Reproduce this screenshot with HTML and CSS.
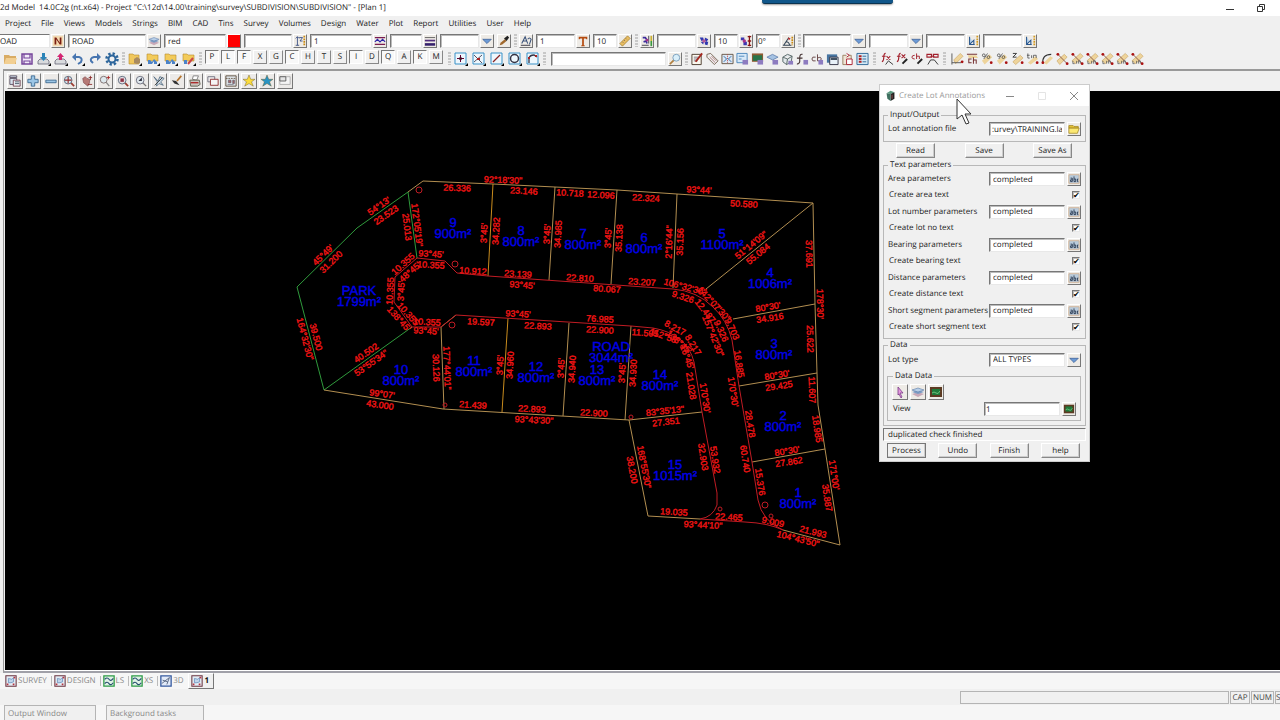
FILE: index.html
```
<!DOCTYPE html>
<html lang="en">
<head>
    <meta charset="UTF-8">
    <meta name="viewport" content="width=device-width, initial-scale=1.0">
    <title>12d Model - Plan 1</title>
    <link rel="stylesheet" href="styles.css">
</head>
<body>
    <!-- shared icons -->
    <svg class="sprite" aria-hidden="true">
        <symbol id="i-n" viewBox="0 0 14 14"><rect x="1" y="1" width="12" height="12" fill="#f3d9b0"/><path d="M3 11V3h2l4 6V3h2v8H9L5 5v6z" fill="#7a1c10"/></symbol>
        <symbol id="i-layers" viewBox="0 0 14 14"><path d="M1 9l6-2 6 2-6 3z" fill="#c9a9b8"/><path d="M1 7l6-2 6 2-6 2z" fill="#7d9cc4"/><path d="M1 5l6-2 6 2-6 2z" fill="#b9cfe8" stroke="#5a7aa8" stroke-width=".6"/></symbol>
        <symbol id="i-red" viewBox="0 0 14 14"><rect width="14" height="14" fill="#f00"/></symbol>
        <symbol id="i-height" viewBox="0 0 14 14"><path d="M4 2v10M2 4l2-2 2 2M2 12h4M6 3h4L7 7h3" fill="none" stroke="#334a80"/><path d="M12 1v12" stroke="#c98a10" stroke-width="2" stroke-dasharray="2 1"/></symbol>
        <symbol id="i-linestyle" viewBox="0 0 14 14"><path d="M1 3h12M1 11h12" stroke="#7a1c50" stroke-width="1.5"/><path d="M1 8l3-3 3 3 3-3 3 3" fill="none" stroke="#2a22a8" stroke-width="1.3"/></symbol>
        <symbol id="i-weight" viewBox="0 0 14 14"><path d="M1 3h12" stroke="#555"/><path d="M1 6.500h12" stroke="#51307c" stroke-width="2"/><path d="M1 11h12" stroke="#34206c" stroke-width="3"/></symbol>
        <symbol id="i-down" viewBox="0 0 14 14"><path d="M2 5h10l-5 5z" fill="#6c9ad6" stroke="#31558c" stroke-width=".8"/></symbol>
        <symbol id="i-dropper" viewBox="0 0 14 14"><path d="M2 12l1-3 5-4 2 2-5 4z" fill="#a0682c"/><path d="M7 4l4-3 2 2-3 4z" fill="#222"/></symbol>
        <symbol id="i-font" viewBox="0 0 14 14"><path d="M2 10l4-8 3 8M3 7h5M9 5q2-3 4 0l-2 6" fill="none" stroke="#385078" stroke-width="1.2"/><path d="M1 12h11" stroke="#223"/></symbol>
        <symbol id="i-t" viewBox="0 0 14 14"><path d="M2 2h10v3h-1l-1-1H8v8h1v1H5v-1h1V4H4L3 5H2z" fill="#b44b10"/></symbol>
        <symbol id="i-ruler" viewBox="0 0 14 14"><path d="M1 10L10 1l3 3-9 9z" fill="#e8bd62" stroke="#9d7626" stroke-width=".8"/><path d="M4 8l1 1M6 6l1 1M8 4l1 1" stroke="#765"/></symbol>
        <symbol id="i-symbol" viewBox="0 0 14 14"><path d="M2 3h3l2 3M3 8l3-1 1 3" fill="none" stroke="#3b2d9c" stroke-width="2"/><path d="M9 1v9M1 12h8" stroke="#334"/><circle cx="7" cy="6" r="1.500" fill="#a5328a"/><path d="M12 1v6" stroke="#c9b030" stroke-width="2"/><path d="M12 7v6" stroke="#3a9a40" stroke-width="2"/></symbol>
        <symbol id="i-rotate" viewBox="0 0 14 14"><path d="M2 3h4l1 3-3 1zM8 3l4 2-2 3-2-1zM8 8h4l-1 4-3-1zM3 8l3 3 1-3z" fill="#2f38b0"/><circle cx="7" cy="7" r="2" fill="#b55a9a"/></symbol>
        <symbol id="i-size" viewBox="0 0 14 14"><path d="M1 3h4v3H1zM4 8h4v4H4z" fill="#3b38b0"/><circle cx="5" cy="7" r="2" fill="#a5328a"/><path d="M11 1v12M9 2h4M9 12h4M9 7h4" stroke="#8a1414" stroke-width="1.5"/></symbol>
        <symbol id="i-angle" viewBox="0 0 14 14"><path d="M1 12h10M2 12l6-9M5 8q3 0 4 4" fill="none" stroke="#345" stroke-width="1.2"/><path d="M7 3l3 1-2 2z" fill="#b22"/><path d="M12 2v10" stroke="#c98a10" stroke-width="2" stroke-dasharray="2 1"/></symbol>
        <symbol id="i-tri" viewBox="0 0 14 14"><path d="M3 2v9h6M3 11l5-5v5" fill="#b8d4ee" stroke="#28558c" stroke-width="1.200"/><path d="M12 1v12" stroke="#d49a20" stroke-width="2" stroke-dasharray="2 1"/></symbol>
        <symbol id="i-open" viewBox="0 0 14 14"><path d="M1 3h5l1 1h6v8H1z" fill="#d9ac64"/><path d="M3 6h11l-2 6H1z" fill="#f2cf92"/></symbol>
        <symbol id="i-save" viewBox="0 0 14 14"><path d="M2 2h10v10H2z" fill="#f2eaf8" stroke="#75459b" stroke-width="1.500"/><path d="M4 2v4h6V2M4 12V9h6v3" fill="none" stroke="#75459b" stroke-width="1.200"/></symbol>
        <symbol id="i-import" viewBox="0 0 14 14"><path d="M1 9l2-2h7l2 2v3H1z" fill="#d8dadd" stroke="#667" stroke-width=".8"/><path d="M5 1h3v4h2L6.500 9 3 5h2z" fill="#2b84b8"/><path d="M14 11v3h-3z"/></symbol>
        <symbol id="i-export" viewBox="0 0 14 14"><path d="M1 9l2-2h7l2 2v3H1z" fill="#d8dadd" stroke="#667" stroke-width=".8"/><path d="M5 8h3V5h2L6.500 1 3 5h2z" fill="#d32572"/><path d="M14 11v3h-3z"/></symbol>
        <symbol id="i-undo" viewBox="0 0 14 14"><path d="M3 5h5q4 1 2 5l-3 2" fill="none" stroke="#4775b0" stroke-width="2"/><path d="M1 5l4-4v8z" fill="#4775b0"/><path d="M14 11v3h-3z"/></symbol>
        <symbol id="i-redo" viewBox="0 0 14 14"><path d="M11 5H6q-4 1-3 4l2 2" fill="none" stroke="#4775b0" stroke-width="2"/><path d="M13 5L9 1v8z" fill="#4775b0"/></symbol>
        <symbol id="i-gear" viewBox="0 0 14 14"><circle cx="7" cy="7" r="5.500" fill="none" stroke="#2c659b" stroke-width="2.500" stroke-dasharray="2.300 2"/><circle cx="7" cy="7" r="3.500" fill="none" stroke="#2c659b" stroke-width="2"/></symbol>
        <symbol id="i-proj" viewBox="0 0 14 14"><path d="M1 2h4l1 1h5v9H1z" fill="#f0c75c" stroke="#b58a2c" stroke-width=".6"/><path d="M6 7l3-2 3 2v4l-3 1-3-1z" fill="#a88a60"/><path d="M14 11v3h-3z"/></symbol>
        <symbol id="i-projx" viewBox="0 0 14 14"><path d="M1 2h4l1 1h6v6H1z" fill="#f3cb5a" stroke="#b58a2c" stroke-width=".6"/><path d="M2 12V8h2l2 2 2-3 3 3v2H8V9l-2 3z" fill="#4b83c8"/><path d="M14 11v3h-3z"/></symbol>
        <symbol id="i-projr" viewBox="0 0 14 14"><path d="M1 2h4l1 1h6v6H1z" fill="#f3cb5a" stroke="#b58a2c" stroke-width=".6"/><path d="M2 8h3v4H2z" fill="#4b83c8"/><path d="M6 12l5-6" stroke="#c44" stroke-width="2"/><path d="M14 11v3h-3z"/></symbol>
        <symbol id="i-snap1" viewBox="0 0 14 14"><path d="M1 1h11v11H1z" fill="#eef7fd" stroke="#3991c7"/><path d="M6.500 3v7M3 6.500h7" stroke="#603"/><circle cx="6.500" cy="6.500" r="1.500" fill="#412"/><path d="M14 11v3h-3z"/></symbol>
        <symbol id="i-snap2" viewBox="0 0 14 14"><path d="M1 1h11v11H1z" fill="#eef7fd" stroke="#3991c7"/><path d="M2 3l8 8M10 3l-8 7" stroke="#556"/><path d="M5 6h3v2H5z" fill="#a22"/><path d="M14 11v3h-3z"/></symbol>
        <symbol id="i-snap3" viewBox="0 0 14 14"><path d="M1 1h11v11H1z" fill="#eef7fd" stroke="#3991c7"/><path d="M3 10l7-7" stroke="#822" stroke-width="1.300"/><path d="M14 11v3h-3z"/></symbol>
        <symbol id="i-snap4" viewBox="0 0 14 14"><path d="M1 1h11v11H1z" fill="#eef7fd" stroke="#3991c7"/><circle cx="6.500" cy="6.500" r="4" fill="none" stroke="#334" stroke-width="1.500"/><path d="M14 11v3h-3z"/></symbol>
        <symbol id="i-snap5" viewBox="0 0 14 14"><path d="M1 1h11v11H1z" fill="#eef7fd" stroke="#3991c7"/><path d="M3 11V6q1-3 5-3l3 2" fill="none" stroke="#334" stroke-width="1.300"/><path d="M2 5h2v2H2zM9 3h2v2H9z" fill="#a22"/><path d="M14 11v3h-3z"/></symbol>
        <symbol id="i-search" viewBox="0 0 14 14"><path d="M1 13l5-5" stroke="#b08040" stroke-width="2"/><circle cx="8.500" cy="5.500" r="4" fill="#d9effa" stroke="#7298b8"/></symbol>
        <symbol id="i-note" viewBox="0 0 14 14"><path d="M1 2h10v11H1z" fill="#fbf8ee" stroke="#4c3b2d"/><path d="M3 5h6M3 7h5M3 9h4" stroke="#778"/><path d="M5 10l7-9" stroke="#a52820" stroke-width="2"/></symbol>
        <symbol id="i-tag" viewBox="0 0 14 14"><path d="M1 2l4-1 8 8-4 4-8-8z" fill="#eee" stroke="#765"/><path d="M4 5l6 6M6 4l5 5" stroke="#a77"/></symbol>
        <symbol id="i-panel" viewBox="0 0 14 14"><path d="M1 2h12v10H1z" fill="#dde8f4" stroke="#654"/><path d="M3 4l3 3-3 3M11 4L8 7l3 3" fill="none" stroke="#2667a8"/><path d="M7 2v10" stroke="#b44" stroke-dasharray="1 1"/></symbol>
        <symbol id="i-grid" viewBox="0 0 14 14"><path d="M1 1h11v10H1z" fill="#d7e9f8" stroke="#4b86bb"/><path d="M3 4h6M3 7h3" stroke="#4b86bb"/><path d="M7 8h6v5H7z" fill="#8d7cc0"/></symbol>
        <symbol id="i-view" viewBox="0 0 14 14"><path d="M1 1h12v9H1z" fill="#8f5a32"/><path d="M2 3h10v6H2z" fill="#287448"/><path d="M7 8h6v5H7z" fill="#8d7cc0"/></symbol>
        <symbol id="i-lay2" viewBox="0 0 14 14"><path d="M1 5l6-3 6 3-6 3z" fill="#a5c2e2" stroke="#5a7aa8" stroke-width=".8"/><path d="M7 8h6v5H7z" fill="#8d7cc0"/></symbol>
        <symbol id="i-cube" viewBox="0 0 14 14"><path d="M2 5l5-3 5 2-1 6-5 3-4-3zM2 5l5 2 5-3M7 7l-1 6" fill="#e1e7ea" stroke="#566"/><path d="M8 9h5v4H8z" fill="#8d7cc0"/></symbol>
        <symbol id="i-func" viewBox="0 0 14 14"><path d="M7 2q-3-1-3 4v4q-1 3-3 2M1 6h6" fill="none" stroke="#433" stroke-width="1.200"/><path d="M8 8h5v5H8z" fill="#8d7cc0"/></symbol>
        <symbol id="i-chain" viewBox="0 0 14 14"><path d="M5 5q-4-1-4 2t4 2M7 2v7M7 6q4-2 4 1t-4 2" fill="none" stroke="#644"/><path d="M8 8h5v5H8z" fill="#8d7cc0"/></symbol>
        <symbol id="i-win" viewBox="0 0 14 14"><path d="M1 2h11v9H1z" fill="#4674a0"/><path d="M4 5h9v8H4z" fill="#e9f1f8" stroke="#334"/><path d="M5 7h7" stroke="#345" stroke-width="2"/></symbol>
        <symbol id="i-clip" viewBox="0 0 14 14"><path d="M2 3h9v10H2z" fill="#eee5d6" stroke="#9a8060"/><path d="M6 1l3 2-3 2M6 7h6v6H6z" fill="#fff" stroke="#a23"/></symbol>
        <symbol id="i-opts" viewBox="0 0 14 14"><path d="M1 1h12v12H1z" fill="#d5e9f6" stroke="#2d6796"/><path d="M3 4h3M3 7h3M3 10h3" stroke="#b02020" stroke-width="2"/><path d="M7 4h4M7 7h4M7 10h4" stroke="#2d6796"/></symbol>
        <symbol id="i-fx" viewBox="0 0 14 14"><path d="M5 1Q3 1 3 5t-2 5M1 4h4M6 4l4 4M10 4L6 8" fill="none" stroke="#a2202c" stroke-width="1.200"/><path d="M5 13l3-4 5 4" fill="none" stroke="#333"/></symbol>
        <symbol id="i-fxp" viewBox="0 0 14 14"><path d="M5 1Q3 1 3 5t-2 5M1 4h4M6 2l4 4M10 2L6 6" fill="none" stroke="#a2202c" stroke-width="1.200"/><path d="M7 12l5-5" stroke="#222" stroke-width="2"/></symbol>
        <symbol id="i-chp" viewBox="0 0 14 14"><path d="M4 3Q1 3 1 5t3 2M6 1v6M6 4h3v3" fill="none" stroke="#a2202c"/><path d="M7 12l5-5" stroke="#222" stroke-width="2"/></symbol>
        <symbol id="i-bind" viewBox="0 0 14 14"><path d="M1 2h5v3H1zM8 2h5v3H8zM5 4h4" fill="none" stroke="#a2202c" stroke-width="1.200"/><path d="M2 13l3-5h4l4 5" fill="none" stroke="#333"/></symbol>
        <symbol id="i-m" viewBox="0 0 14 14"><path d="M3 8L10 1l3 3-8 8z" fill="#eed49b" stroke="#c5a05b" stroke-width=".6"/><path d="M1 1v12M1 11h10" fill="none" stroke="#555"/><circle cx="12" cy="10" r="1.500" fill="#a11"/></symbol>
        <symbol id="i-mch" viewBox="0 0 14 14"><path d="M2 3h9l2 3H3z" fill="#eed49b"/><path d="M1 2h11M6 7H3v4h3M8 5v7M8 8h3v4" fill="none" stroke="#733" stroke-width="1.100"/></symbol>
        <symbol id="i-mpct" viewBox="0 0 14 14"><path d="M1 9L9 2l3 3-8 8z" fill="#eed49b"/><circle cx="3" cy="3" r="1.500" fill="none" stroke="#444" stroke-width=".8"/><path d="M3 7l4-6" stroke="#444" stroke-width=".8"/><circle cx="8" cy="5" r="1.500" fill="none" stroke="#444" stroke-width=".8"/><circle cx="11" cy="11" r="1.500" fill="#a11"/></symbol>
        <symbol id="i-mz" viewBox="0 0 14 14"><path d="M2 10L10 3l3 3-8 7z" fill="#eed49b" stroke="#c5a05b" stroke-width=".6"/><path d="M2 1h4L2 5h4" fill="none" stroke="#333"/><circle cx="12" cy="11" r="1.500" fill="#a11"/></symbol>
        <symbol id="i-mtin" viewBox="0 0 14 14"><path d="M2 11L10 4l3 3-8 6z" fill="#eed49b"/><path d="M2 1v5h2M1 3h3M6 3v3M8 6V3h3v3" fill="none" stroke="#444" stroke-width=".8"/><circle cx="12" cy="11" r="1.500" fill="#a11"/></symbol>
        <symbol id="i-marc" viewBox="0 0 14 14"><path d="M3 11L10 4l3 2-7 7z" fill="#eed49b"/><path d="M2 12Q1 2 11 2" fill="none" stroke="#333" stroke-width="1.300"/><circle cx="2" cy="11" r="1.500" fill="#a11"/></symbol>
        <symbol id="i-mx" viewBox="0 0 14 14"><path d="M1 9L9 2l3 3-8 8z" fill="#eed49b" stroke="#c5a05b" stroke-width=".6"/><path d="M2 2l10 10" stroke="#854"/><circle cx="2" cy="2" r="1.500" fill="#a11"/><circle cx="12" cy="12" r="1.500" fill="#a11"/></symbol>
        <symbol id="i-mxt" viewBox="0 0 14 14"><path d="M1 9L10 1l3 3-8 8z" fill="#eed49b" stroke="#c5a05b" stroke-width=".6"/><path d="M2 2l10 10" stroke="#854"/><path d="M2 9v3h2M6 9v3M8 12V9h2v3" fill="none" stroke="#555" stroke-width=".8"/><circle cx="2" cy="2" r="1.500" fill="#a11"/><circle cx="12" cy="12" r="1.500" fill="#a11"/></symbol>
        <symbol id="i-menu" viewBox="0 0 14 14"><path d="M1 1h8v2H1zM1 4h8v7H1z" fill="#d8e3ee" stroke="#534a5c"/><path d="M5 6h8v7H5z" fill="#e9eef4" stroke="#6b3a4a"/><path d="M7 8h5M7 10h5" stroke="#456"/></symbol>
        <symbol id="i-plus" viewBox="0 0 14 14"><path d="M5 1h4v4h4v4H9v4H5V9H1V5h4z" fill="#9cc6e6" stroke="#38668e"/></symbol>
        <symbol id="i-minus" viewBox="0 0 14 14"><path d="M1 6h12v3H1z" fill="#9cc6e6" stroke="#38668e"/></symbol>
        <symbol id="i-zoomx" viewBox="0 0 14 14"><path d="M9 9l4 4" stroke="#9d3c30" stroke-width="2"/><circle cx="6" cy="6" r="4.500" fill="#d5e6f0" stroke="#536476"/><path d="M6 2v8M2 6h8" stroke="#912828" stroke-width="1.300"/></symbol>
        <symbol id="i-pan" viewBox="0 0 14 14"><path d="M2 4l3-2 2 2 3 1v4l-2 4-5-4z" fill="#b57874" stroke="#7b4448" stroke-width=".7"/><path d="M11 1v5M9 3h4M8 11h5" stroke="#8a2828"/></symbol>
        <symbol id="i-zoomp" viewBox="0 0 14 14"><path d="M8 8l4 5" stroke="#888" stroke-width="1.500"/><circle cx="5.500" cy="5.500" r="4" fill="#dde8ed" stroke="#766"/><path d="M11 1v4M9 3h4" stroke="#a22"/></symbol>
        <symbol id="i-zoomb" viewBox="0 0 14 14"><path d="M9 9l4 4" stroke="#9d3c30" stroke-width="2"/><circle cx="6" cy="6" r="4.500" fill="#e4dfe4" stroke="#536476"/><path d="M4 4h4v4H4z" fill="#8d3345"/></symbol>
        <symbol id="i-zoomk" viewBox="0 0 14 14"><path d="M9 9l4 4" stroke="#777" stroke-width="1.500"/><circle cx="6" cy="6" r="4.500" fill="#e0e9ee" stroke="#667"/><path d="M4 7l4-4v4z" fill="#334"/></symbol>
        <symbol id="i-edit" viewBox="0 0 14 14"><path d="M1 2l5 5 2-5 5 2-4 4 3 4-5-2-3 3 1-5z" fill="#ccdbe6" stroke="#566f84"/><path d="M2 12L11 3" stroke="#333"/></symbol>
        <symbol id="i-brush" viewBox="0 0 14 14"><path d="M12 1L7 7" stroke="#b5742c" stroke-width="2"/><path d="M1 6l5 1 4 5-6-2z" fill="#333"/></symbol>
        <symbol id="i-print" viewBox="0 0 14 14"><path d="M4 5l1-4h6L9 6z" fill="#fff" stroke="#777"/><path d="M1 6h11l1 5-3 2H2z" fill="#c7c3bd" stroke="#554"/><path d="M2 9h9" stroke="#a22" stroke-width="1.500"/></symbol>
        <symbol id="i-copy" viewBox="0 0 14 14"><path d="M1 2h8v6H1z" fill="#eee" stroke="#667"/><path d="M4 5h9v7H4z" fill="#f5f5f5" stroke="#822"/></symbol>
        <symbol id="i-plan" viewBox="0 0 14 14"><path d="M1 1h12v12H1z" fill="#dfe5e9" stroke="#543"/><path d="M1 4h12" stroke="#654" stroke-dasharray="2 1"/><path d="M4 6h3v3H4zM9 6h2v4H9zM3 11h7" fill="#a66" stroke="#556" stroke-width=".7"/></symbol>
        <symbol id="i-star" viewBox="0 0 14 14"><path d="M7 0l2 5 5 0-4 3 2 5-5-3-5 3 2-5-4-3h5z" stroke="#665522" stroke-width=".5"/></symbol>
        <symbol id="i-layout" viewBox="0 0 14 14"><path d="M1 2h12v9H1z" fill="#f4f4f4" stroke="#aaa"/><path d="M1 2h7v5H1z" fill="#e4e4e4" stroke="#555"/></symbol>
        <symbol id="i-tabplan" viewBox="0 0 14 14"><path d="M1 1h12v12H1z" fill="#e4edf4" stroke="#6a3440" stroke-width="1.200"/><path d="M4 9V4l4 1 2-2v5l-3 1z" fill="#c3d6ea" stroke="#5a86b8" stroke-width=".8"/><path d="M2 10h2v2H2zM9 10h2v2H9z" fill="#b83440"/><path d="M10 2h2v2h-2z" fill="#b83440"/></symbol>
        <symbol id="i-tabsec" viewBox="0 0 14 14"><path d="M1 1h12v12H1z" fill="#dff2e4" stroke="#2f9c48" stroke-width="1.500"/><path d="M2 5q3-3 5 0t5-1M2 10q3-3 5 0t5-1" fill="none" stroke="#244c70" stroke-width="1.300"/></symbol>
        <symbol id="i-tab3d" viewBox="0 0 14 14"><path d="M1 1h12v12H1z" fill="#e2eaf8" stroke="#365aa0" stroke-width="1.500"/><path d="M2 10l9-7-3 8M3 6l6 2" fill="none" stroke="#4c5c78"/></symbol>
        <symbol id="i-folder" viewBox="0 0 14 14"><path d="M1 3h5l1 1h5v2H1z" fill="#e9c63a" stroke="#9a7c14" stroke-width=".8"/><path d="M1 12V6h12l-2 6z" fill="#fbe873" stroke="#9a7c14" stroke-width=".8"/></symbol>
        <symbol id="i-abc" viewBox="0 0 14 14"><path d="M1 2h12v10H1z" fill="#b9cbdc" stroke="#d0b090"/><path d="M3 6h2v4H3V8h2M7 4v6h2V7H7M12 7h-1v3h1" fill="none" stroke="#23344c"/></symbol>
        <symbol id="i-pick" viewBox="0 0 14 14"><path d="M5 2l5 6-3 0 2 4-1 1-2-4-1 1z" fill="#e59ade" stroke="#7a3b88" stroke-width=".8"/></symbol>
        <symbol id="i-screen" viewBox="0 0 14 14"><path d="M1 2h12v10H1z" fill="#5c3a22"/><path d="M3 4h8v6H3z" fill="#1f7a3a"/><path d="M3 8q2-2 4 0t4-2" fill="none" stroke="#6fc07c"/></symbol>
    </svg>

    <header class="titlebar">
        <h1 class="title">2d Model&nbsp; 14.0C2g (nt.x64) - Project "C:\12d\14.00\training\survey\SUBDIVISION\SUBDIVISION" - [Plan 1]</h1>
        <div class="win-buttons">
            <button aria-label="Minimize"><svg viewBox="0 0 10 10"><path d="M1 6.500h8" stroke="#333"/></svg></button>
            <button aria-label="Restore"><svg viewBox="0 0 10 10"><path d="M1.500 3.500h5v5h-5zM3.500 3V1.500h5v5H7" fill="none" stroke="#333"/></svg></button>
        </div>
        <div class="share-tab"></div>
    </header>

    <nav class="menubar">
        <button>Project</button><button>File</button><button>Views</button><button>Models</button><button>Strings</button><button>BIM</button><button>CAD</button><button>Tins</button><button>Survey</button><button>Volumes</button><button>Design</button><button>Water</button><button>Plot</button><button>Report</button><button>Utilities</button><button>User</button><button>Help</button>
    </nav>

    <div class="bar fields">
        <input class="w-l cut" value="OAD" aria-label="Name"><button class="btn" aria-label="Pick name"><svg><use href="#i-n"/></svg></button>
        <input class="w-xxl" value="ROAD" aria-label="Model"><button class="btn" aria-label="Pick model"><svg><use href="#i-layers"/></svg></button>
        <input class="w-xl" value="red" aria-label="Colour"><button class="btn" aria-label="Pick colour"><svg><use href="#i-red"/></svg></button>
        <input class="w-l" aria-label="Height"><button class="btn" aria-label="Pick height"><svg><use href="#i-height"/></svg></button>
        <input class="w-xl" value="1" aria-label="Line style"><button class="btn" aria-label="Pick line style"><svg><use href="#i-linestyle"/></svg></button>
        <input class="w-s" aria-label="Weight"><button class="btn" aria-label="Pick weight"><svg><use href="#i-weight"/></svg></button>
        <select class="w-m" aria-label="Tinable"><option></option></select><button class="btn" aria-label="Open tinable"><svg><use href="#i-down"/></svg></button>
        <button class="btn" aria-label="Pick attributes"><svg><use href="#i-dropper"/></svg></button>
        <span class="grip"></span>
        <button class="btn" aria-label="Text style"><svg><use href="#i-font"/></svg></button>
        <input class="w-m" value="1" aria-label="Textstyle"><button class="btn" aria-label="Pick textstyle"><svg><use href="#i-t"/></svg></button>
        <input class="w-xs" value="10" aria-label="Text size"><button class="btn" aria-label="Measure size"><svg><use href="#i-ruler"/></svg></button>
        <span class="grip"></span>
        <button class="btn" aria-label="Symbol"><svg><use href="#i-symbol"/></svg></button>
        <input class="w-m" aria-label="Symbol name"><button class="btn" aria-label="Pick symbol"><svg><use href="#i-rotate"/></svg></button>
        <input class="w-xs" value="10" aria-label="Symbol size"><button class="btn" aria-label="Measure symbol"><svg><use href="#i-size"/></svg></button>
        <input class="w-xs tight" value="0°" aria-label="Symbol angle"><button class="btn" aria-label="Measure angle"><svg><use href="#i-angle"/></svg></button>
        <span class="grip"></span>
        <select class="w-l" aria-label="Vertex"><option></option></select><button class="btn" aria-label="Open vertex"><svg><use href="#i-down"/></svg></button>
        <select class="w-m" aria-label="Segment"><option></option></select><button class="btn" aria-label="Open segment"><svg><use href="#i-down"/></svg></button>
        <input class="w-m" aria-label="Offset"><button class="btn" aria-label="Measure offset"><svg><use href="#i-tri"/></svg></button>
        <input class="w-m" aria-label="Raise"><button class="btn" aria-label="Measure raise"><svg><use href="#i-tri"/></svg></button>
    </div>

    <div class="bar">
        <div class="tools tools-file">
            <button aria-label="Open"><svg><use href="#i-open"/></svg></button>
            <button aria-label="Save"><svg><use href="#i-save"/></svg></button>
            <button aria-label="Import"><svg><use href="#i-import"/></svg></button>
            <button aria-label="Export"><svg><use href="#i-export"/></svg></button>
            <button aria-label="Undo"><svg><use href="#i-undo"/></svg></button>
            <button aria-label="Redo"><svg><use href="#i-redo"/></svg></button>
            <button aria-label="Settings"><svg><use href="#i-gear"/></svg></button>
        </div>
        <span class="grip"></span>
        <div class="tools tools-wide">
            <button aria-label="Project folder"><svg><use href="#i-proj"/></svg></button>
            <button aria-label="Customer folder"><svg><use href="#i-projx"/></svg></button>
            <button aria-label="User folder"><svg><use href="#i-projx"/></svg></button>
            <button aria-label="Recent folder"><svg><use href="#i-projr"/></svg></button>
        </div>
        <span class="grip"></span>
        <div class="letters">
            <button class="on">P</button><button class="on">L</button><button class="on">F</button><button>X</button><button>G</button><button class="on">C</button><button>H</button><button>T</button><button>S</button><button class="on">I</button><button>D</button><button class="on">Q</button><button>A</button><button class="on">K</button><button>M</button>
        </div>
        <span class="grip"></span>
        <div class="tools tools-wide">
            <button aria-label="Point"><svg><use href="#i-snap1"/></svg></button>
            <button aria-label="Intersection"><svg><use href="#i-snap2"/></svg></button>
            <button aria-label="Line"><svg><use href="#i-snap3"/></svg></button>
            <button aria-label="Circle"><svg><use href="#i-snap4"/></svg></button>
            <button aria-label="Arc"><svg><use href="#i-snap5"/></svg></button>
        </div>
        <span class="grip"></span>
        <div class="search">
            <input aria-label="Search"><button class="btn" aria-label="Find"><svg><use href="#i-search"/></svg></button>
        </div>
        <span class="grip"></span>
        <div class="tools tools-small">
            <button aria-label="Edit"><svg><use href="#i-note"/></svg></button>
            <button aria-label="Label"><svg><use href="#i-tag"/></svg></button>
            <button aria-label="Panel"><svg><use href="#i-panel"/></svg></button>
            <button aria-label="Grid"><svg><use href="#i-grid"/></svg></button>
            <button aria-label="View manager"><svg><use href="#i-view"/></svg></button>
            <button aria-label="Model manager"><svg><use href="#i-lay2"/></svg></button>
            <button aria-label="Tin manager"><svg><use href="#i-cube"/></svg></button>
            <button aria-label="Functions"><svg><use href="#i-func"/></svg></button>
            <button aria-label="Chains"><svg><use href="#i-chain"/></svg></button>
            <button aria-label="Windows"><svg><use href="#i-win"/></svg></button>
            <button aria-label="Clipboard"><svg><use href="#i-clip"/></svg></button>
            <button aria-label="Options"><svg><use href="#i-opts"/></svg></button>
        </div>
        <span class="grip"></span>
        <div class="tools tools-small">
            <button aria-label="Run function"><svg><use href="#i-fx"/></svg></button>
            <button aria-label="Edit function"><svg><use href="#i-fxp"/></svg></button>
            <button aria-label="Edit chain"><svg><use href="#i-chp"/></svg></button>
            <button aria-label="Bind"><svg><use href="#i-bind"/></svg></button>
        </div>
        <span class="grip"></span>
        <div class="tools tools-small">
            <button aria-label="Measure offset"><svg><use href="#i-m"/></svg></button>
            <button aria-label="Measure chainage"><svg><use href="#i-mch"/></svg></button>
            <button aria-label="Measure grade"><svg><use href="#i-mpct"/></svg></button>
            <button aria-label="Measure slope"><svg><use href="#i-mpct"/></svg></button>
            <button aria-label="Measure z"><svg><use href="#i-mz"/></svg></button>
            <button aria-label="Measure tin"><svg><use href="#i-mtin"/></svg></button>
            <button aria-label="Measure arc"><svg><use href="#i-marc"/></svg></button>
            <button aria-label="Measure distance"><svg><use href="#i-mx"/></svg></button>
            <button aria-label="Measure 3d"><svg><use href="#i-mxt"/></svg></button>
            <button aria-label="Measure dz"><svg><use href="#i-mxt"/></svg></button>
            <button aria-label="Measure bearing"><svg><use href="#i-mxt"/></svg></button>
            <button aria-label="Measure percent"><svg><use href="#i-mxt"/></svg></button>
            <button aria-label="Measure tin grade"><svg><use href="#i-mxt"/></svg></button>
        </div>
    </div>

    <main class="plan">
        <div class="plan-tools">
            <button aria-label="Menu"><svg><use href="#i-menu"/></svg></button>
            <button aria-label="Add model"><svg><use href="#i-plus"/></svg></button>
            <button aria-label="Remove model"><svg><use href="#i-minus"/></svg></button>
            <button aria-label="Zoom extents"><svg><use href="#i-zoomx"/></svg></button>
            <button aria-label="Pan"><svg><use href="#i-pan"/></svg></button>
            <button aria-label="Zoom in"><svg><use href="#i-zoomp"/></svg></button>
            <button aria-label="Zoom box"><svg><use href="#i-zoomb"/></svg></button>
            <button aria-label="Zoom previous"><svg><use href="#i-zoomk"/></svg></button>
            <button aria-label="Edit"><svg><use href="#i-edit"/></svg></button>
            <button aria-label="Redraw"><svg><use href="#i-brush"/></svg></button>
            <button aria-label="Plot"><svg><use href="#i-print"/></svg></button>
            <button aria-label="Copy"><svg><use href="#i-copy"/></svg></button>
            <button aria-label="Plan settings"><svg><use href="#i-plan"/></svg></button>
            <button aria-label="Favourites"><svg fill="#fbdc3c"><use href="#i-star"/></svg></button>
            <button aria-label="More favourites"><svg fill="#2894c4"><use href="#i-star"/></svg></button>
            <button aria-label="Layout"><svg><use href="#i-layout"/></svg></button>
        </div>

        <div class="canvas">
            <svg class="drawing" viewBox="5 91 1275 580" preserveAspectRatio="xMinYMin meet">
                <g class="park">
                    <path d="M417 258L408 192L357 228L297 287L324 390L412 327"/>
                </g>
                <g class="lots">
                    <path d="M408 192L423 181L493 184L555 187L617 190L677 194L813 203L815 304L817 373L818 405L825 449L840 545L783 530"/>
                    <path d="M324 390L443 409L629 420L702 412M629 420L648 516L700 519"/>
                    <path d="M555 187L549 280M617 190L611 284M677 194L673 288M813 203L706 289M815 304L733 319M817 373L739 386M825 449L752 462"/>
                    <path d="M456 315L441 327L444 409M569 323L563 416M631 326L625 420"/>
                    <path class="hot" d="M493 184L488 276M508 318L502 412"/>
                </g>
                <g class="road">
                    <path d="M417 258L445 261L457 273L488 276L673 289Q697 291 713 307Q727 320 732 340L739 386L752 462L758 500Q762 521 783 530Q768 523 745 522L700 519Q713 517 717 505V493L702 412L694 362Q687 334 653 328L631 326L456 315L441 327L412 327L394 302L395 277L417 258"/>
                    <circle cx="419" cy="190" r="3"/><circle cx="455" cy="264" r="3"/><circle cx="452" cy="325" r="3"/>
                    <circle cx="445" cy="405" r="2"/><circle cx="631" cy="417" r="2"/><circle cx="720" cy="509" r="2"/>
                    <circle cx="765" cy="505" r="3"/><circle cx="771" cy="516" r="2"/>
                </g>

                <g class="dims">
                    <text transform="translate(379 206) rotate(-35)">54°13'</text>
                    <text transform="translate(386 215) rotate(-35)">23.523</text>
                    <text transform="translate(323 255) rotate(-44)">45°49'</text>
                    <text transform="translate(331 262) rotate(-44)">31.200</text>
                    <text transform="translate(417 225) rotate(83)">172°05'19"</text>
                    <text transform="translate(407 227) rotate(83)">25.013</text>
                    <text transform="translate(457 188) rotate(2)">26.336</text>
                    <text transform="translate(503 180) rotate(2)">92°18'30"</text>
                    <text transform="translate(431 254) rotate(3)">93°45'</text>
                    <text transform="translate(431 265) rotate(3)">10.355</text>
                    <text transform="translate(403 264) rotate(-42)">10.355</text>
                    <text transform="translate(410 272) rotate(-42)">48°45'</text>
                    <text transform="translate(390 291) rotate(-87)">10.355</text>
                    <text transform="translate(401 291) rotate(-87)">3°45'</text>
                    <text transform="translate(408 314) rotate(48)">10.355</text>
                    <text transform="translate(399 319) rotate(48)">138°45'</text>
                    <text transform="translate(427 322) rotate(3)">10.355</text>
                    <text transform="translate(426 331) rotate(3)">93°45'</text>
                    <text transform="translate(316 337) rotate(75)">39.500</text>
                    <text transform="translate(305 339) rotate(75)">164°32'30"</text>
                    <text transform="translate(366 353) rotate(-35)">40.502</text>
                    <text transform="translate(371 363) rotate(-35)">53°55'34"</text>
                    <text transform="translate(382 394) rotate(8)">99°07'</text>
                    <text transform="translate(380 405) rotate(8)">43.000</text>
                    <text transform="translate(436 368) rotate(88)">30.126</text>
                    <text transform="translate(447 368) rotate(88)">177°44'01"</text>
                    <text transform="translate(473 405) rotate(4)">21.439</text>
                    <text transform="translate(473 271) rotate(4)">10.912</text>
                    <text transform="translate(518 274) rotate(4)">23.139</text>
                    <text transform="translate(522 285) rotate(4)">93°45'</text>
                    <text transform="translate(580 278) rotate(4)">22.810</text>
                    <text transform="translate(607 289) rotate(4)">80.067</text>
                    <text transform="translate(642 282) rotate(4)">23.207</text>
                    <text transform="translate(484 233) rotate(-87)">3°45'</text>
                    <text transform="translate(496 231) rotate(-87)">34.282</text>
                    <text transform="translate(547 234) rotate(-87)">3°45'</text>
                    <text transform="translate(558 234) rotate(-87)">34.985</text>
                    <text transform="translate(608 238) rotate(-87)">3°45'</text>
                    <text transform="translate(619 238) rotate(-87)">35.138</text>
                    <text transform="translate(524 191) rotate(3)">23.146</text>
                    <text transform="translate(570 193) rotate(3)">10.718</text>
                    <text transform="translate(601 195) rotate(3)">12.096</text>
                    <text transform="translate(646 198) rotate(3)">22.324</text>
                    <text transform="translate(699 190) rotate(3)">93°44'</text>
                    <text transform="translate(744 204) rotate(3)">50.580</text>
                    <text transform="translate(669 242) rotate(-88)">2°16'44"</text>
                    <text transform="translate(680 242) rotate(-88)">35.156</text>
                    <text transform="translate(751 245) rotate(-39)">51°14'09"</text>
                    <text transform="translate(758 254) rotate(-39)">55.084</text>
                    <text transform="translate(809 254) rotate(89)">37.691</text>
                    <text transform="translate(820 304) rotate(89)">178°30'</text>
                    <text transform="translate(768 307) rotate(-9)">80°30'</text>
                    <text transform="translate(770 318) rotate(-9)">34.916</text>
                    <text transform="translate(810 339) rotate(89)">25.622</text>
                    <text transform="translate(685 287) rotate(15)">106°32'30"</text>
                    <text transform="translate(683 297) rotate(18)">9.326</text>
                    <text transform="translate(705 311) rotate(52)">12.487</text>
                    <text transform="translate(714 304) rotate(47)">142°07'30"</text>
                    <text transform="translate(713 336) rotate(68)">157°42'30"</text>
                    <text transform="translate(721 331) rotate(65)">9.326</text>
                    <text transform="translate(732 329) rotate(65)">9.703</text>
                    <text transform="translate(675 328) rotate(28)">8.217</text>
                    <text transform="translate(693 345) rotate(58)">8.217</text>
                    <text transform="translate(645 333) rotate(4)">11.505</text>
                    <text transform="translate(664 336) rotate(20)">112°58'</text>
                    <text transform="translate(679 342) rotate(42)">138°45'</text>
                    <text transform="translate(687 357) rotate(70)">16°45'</text>
                    <text transform="translate(739 364) rotate(81)">16.885</text>
                    <text transform="translate(777 375) rotate(-9)">80°30'</text>
                    <text transform="translate(779 386) rotate(-9)">29.425</text>
                    <text transform="translate(733 392) rotate(81)">170°30'</text>
                    <text transform="translate(691 386) rotate(81)">21.028</text>
                    <text transform="translate(705 398) rotate(81)">170°30'</text>
                    <text transform="translate(812 390) rotate(88)">11.607</text>
                    <text transform="translate(750 424) rotate(81)">28.478</text>
                    <text transform="translate(817 429) rotate(81)">18.985</text>
                    <text transform="translate(787 451) rotate(-9)">80°30'</text>
                    <text transform="translate(789 462) rotate(-9)">27.862</text>
                    <text transform="translate(745 459) rotate(81)">60.740</text>
                    <text transform="translate(760 482) rotate(81)">15.376</text>
                    <text transform="translate(834 475) rotate(81)">171°00'</text>
                    <text transform="translate(827 498) rotate(81)">35.887</text>
                    <text transform="translate(813 532) rotate(14)">21.993</text>
                    <text transform="translate(798 539) rotate(14)">104°43'50"</text>
                    <text transform="translate(773 522) rotate(12)">9.009</text>
                    <text transform="translate(665 411) rotate(-6)">83°35'13"</text>
                    <text transform="translate(666 422) rotate(-6)">27.351</text>
                    <text transform="translate(703 457) rotate(81)">32.903</text>
                    <text transform="translate(715 460) rotate(81)">53.932</text>
                    <text transform="translate(644 467) rotate(79)">168°55'30"</text>
                    <text transform="translate(632 470) rotate(79)">38.200</text>
                    <text transform="translate(674 512) rotate(3)">19.035</text>
                    <text transform="translate(703 525) rotate(3)">93°44'10"</text>
                    <text transform="translate(729 517) rotate(3)">22.465</text>
                    <text transform="translate(518 314) rotate(3)">93°45'</text>
                    <text transform="translate(481 322) rotate(3)">19.597</text>
                    <text transform="translate(538 326) rotate(3)">22.893</text>
                    <text transform="translate(600 319) rotate(3)">76.985</text>
                    <text transform="translate(600 330) rotate(3)">22.900</text>
                    <text transform="translate(500 365) rotate(-87)">3°45'</text>
                    <text transform="translate(510 365) rotate(-87)">34.960</text>
                    <text transform="translate(561 368) rotate(-87)">3°45'</text>
                    <text transform="translate(572 369) rotate(-87)">34.940</text>
                    <text transform="translate(622 373) rotate(-87)">3°45'</text>
                    <text transform="translate(633 373) rotate(-87)">34.930</text>
                    <text transform="translate(532 409) rotate(3)">22.893</text>
                    <text transform="translate(534 420) rotate(3)">93°43'30"</text>
                    <text transform="translate(594 413) rotate(3)">22.900</text>
                </g>

                <g class="names">
                    <text x="453" y="222">9</text><text x="453" y="233">900m²</text>
                    <text x="521" y="230">8</text><text x="521" y="241">800m²</text>
                    <text x="583" y="233">7</text><text x="583" y="244">800m²</text>
                    <text x="644" y="237">6</text><text x="644" y="248">800m²</text>
                    <text x="722" y="233">5</text><text x="722" y="244">1100m²</text>
                    <text x="770" y="272">4</text><text x="770" y="283">1006m²</text>
                    <text x="774" y="343">3</text><text x="774" y="354">800m²</text>
                    <text x="783" y="415">2</text><text x="783" y="426">800m²</text>
                    <text x="798" y="492">1</text><text x="798" y="503">800m²</text>
                    <text x="675" y="464">15</text><text x="675" y="475">1015m²</text>
                    <text x="660" y="374">14</text><text x="660" y="385">800m²</text>
                    <text x="597" y="369">13</text><text x="597" y="380">800m²</text>
                    <text x="611" y="346">ROAD</text><text x="611" y="357">3044m²</text>
                    <text x="536" y="366">12</text><text x="536" y="377">800m²</text>
                    <text x="474" y="360">11</text><text x="474" y="371">800m²</text>
                    <text x="401" y="369">10</text><text x="401" y="380">800m²</text>
                    <text x="359" y="290">PARK</text><text x="359" y="301">1799m²</text>
                </g>
            </svg>
        </div>
    </main>

    <footer>
        <div class="tabs">
            <button><svg><use href="#i-tabplan"/></svg>SURVEY</button>
            <button><svg><use href="#i-tabplan"/></svg>DESIGN</button>
            <button><svg><use href="#i-tabsec"/></svg>LS</button>
            <button><svg><use href="#i-tabsec"/></svg>XS</button>
            <button><svg><use href="#i-tab3d"/></svg>3D</button>
            <button class="active"><svg><use href="#i-tabplan"/></svg>1</button>
        </div>
        <div class="status">
            <span class="status-msg"></span><span class="key">CAP</span><span class="key num">NUM</span><span class="key last">S</span>
        </div>
        <div class="docked">
            <button>Output Window</button><button class="wide">Background tasks</button>
        </div>
    </footer>

    <section class="dialog" role="dialog" aria-labelledby="dlg-title">
        <div class="dlg-title">
            <svg class="logo" viewBox="0 0 14 14"><path d="M2 4l5-3 5 2-5 2z" fill="#5a9a80"/><path d="M7 5l5-2v8l-5 3z" fill="#222"/><path d="M2 4l5 1v9l-4-3z" fill="#3f7060"/><path d="M9 6v5" stroke="#a55"/></svg>
            <h2 id="dlg-title">Create Lot Annotations</h2>
            <button aria-label="Minimize dialog"><svg viewBox="0 0 10 10"><path d="M1 5.500h8" stroke="#888"/></svg></button>
            <button aria-label="Maximize dialog"><svg viewBox="0 0 10 10"><path d="M1.500 1.500h7v7h-7z" fill="none" stroke="#e4e4e4"/></svg></button>
            <button aria-label="Close dialog"><svg viewBox="0 0 10 10"><path d="M1 1l8 8M9 1L1 9" stroke="#888"/></svg></button>
        </div>
        <div class="dlg-body">
            <fieldset>
                <legend>Input/Output</legend>
                <div class="row"><label for="file">Lot annotation file</label><input class="file" id="file" value=":urvey\TRAINING.la"><button class="btn" aria-label="Browse"><svg><use href="#i-folder"/></svg></button></div>
            </fieldset>
            <div class="actions top">
                <button>Read</button><button>Save</button><button>Save As</button>
            </div>
            <fieldset class="params">
                <legend>Text parameters</legend>
                <div class="row"><label for="area">Area parameters</label><input id="area" value="completed"><button class="btn" aria-label="Edit area"><svg><use href="#i-abc"/></svg></button></div>
                <div class="row check"><label for="c-area">Create area text</label><input type="checkbox" id="c-area" checked></div>
                <div class="row"><label for="lotno">Lot number parameters</label><input id="lotno" value="completed"><button class="btn" aria-label="Edit lot number"><svg><use href="#i-abc"/></svg></button></div>
                <div class="row check"><label for="c-lotno">Create lot no text</label><input type="checkbox" id="c-lotno" checked></div>
                <div class="row"><label for="bearing">Bearing parameters</label><input id="bearing" value="completed"><button class="btn" aria-label="Edit bearing"><svg><use href="#i-abc"/></svg></button></div>
                <div class="row check"><label for="c-bearing">Create bearing text</label><input type="checkbox" id="c-bearing" checked></div>
                <div class="row"><label for="dist">Distance parameters</label><input id="dist" value="completed"><button class="btn" aria-label="Edit distance"><svg><use href="#i-abc"/></svg></button></div>
                <div class="row check"><label for="c-dist">Create distance text</label><input type="checkbox" id="c-dist" checked></div>
                <div class="row"><label for="short">Short segment parameters</label><input id="short" value="completed"><button class="btn" aria-label="Edit short segment"><svg><use href="#i-abc"/></svg></button></div>
                <div class="row check"><label for="c-short">Create short segment text</label><input type="checkbox" id="c-short" checked></div>
            </fieldset>
            <fieldset class="data">
                <legend>Data</legend>
                <div class="row"><label for="type">Lot type</label><select id="type"><option>ALL TYPES</option></select><button class="btn" aria-label="Open lot types"><svg><use href="#i-down"/></svg></button></div>
                <fieldset class="inner">
                    <legend>Data Data</legend>
                    <div class="pickers">
                        <button class="btn" aria-label="Pick string"><svg><use href="#i-pick"/></svg></button>
                        <button class="btn" aria-label="Pick model"><svg><use href="#i-layers"/></svg></button>
                        <button class="btn" aria-label="Pick view"><svg><use href="#i-screen"/></svg></button>
                    </div>
                    <div class="row"><label for="view">View</label><input class="tight" id="view" value="1"><button class="btn" aria-label="Choose view"><svg><use href="#i-screen"/></svg></button></div>
                </fieldset>
            </fieldset>
            <output class="message">duplicated check finished</output>
            <div class="actions">
                <button class="default">Process</button><button>Undo</button><button>Finish</button><button>help</button>
            </div>
        </div>
        <svg class="cursor" viewBox="0 0 16 28"><path d="M1 1v20l5-4 4 9 3-1-4-9h6z" fill="#fff" stroke="#333"/></svg>
    </section>
</body>
</html>
```
FILE: styles.css
```
* { box-sizing: border-box; }
body { margin: 0; height: 100vh; display: flex; flex-direction: column; overflow: hidden; position: relative; background: #f0f0f0; color: #1a1a1a; font: 8px/12px "Open Sans", "Noto Sans", sans-serif; text-rendering: geometricPrecision; }
button, input, select { font: inherit; color: inherit; margin: 0; border-radius: 0; text-rendering: inherit; }
button { display: flex; align-items: center; justify-content: center; padding: 0; border: none; background: none; flex: none; white-space: nowrap; }
button svg { width: 100%; height: 100%; display: block; }
input, select { appearance: none; padding: 0 3px; height: 14px; background: #fff; border: 1px solid #e8e8e8; border-top-color: #777; border-left-color: #777; box-shadow: inset 1px 1px 0 #bbb; outline: none; min-width: 0; }
h1, h2 { margin: 0; font-size: inherit; font-weight: normal; }
fieldset { margin: 0; min-width: 0; border: 1px solid #b8b8b8; }
legend { padding: 0 2px; }
.sprite { position: absolute; width: 0; height: 0; }

/* title and menu */
.titlebar { display: flex; align-items: center; height: 16px; flex: none; background: #fff; }
.title { flex: 1; }
.win-buttons { display: flex; gap: 21px; padding-right: 14px; }
.win-buttons button { width: 10px; height: 10px; }
.share-tab { position: absolute; top: 0; left: 762px; width: 131px; height: 4px; background: #10568a; border-bottom: 1px solid #0a3350; border-radius: 0 0 3px 3px; box-shadow: 0 1px 2px #999; }
.menubar { display: flex; flex: none; gap: 10px; height: 16px; padding-left: 5px; }

/* toolbars */
.bar { display: flex; flex: none; height: 19px; padding-top: 2px; }
.fields { height: 18px; }
.fields input, .fields select { margin-right: 1px; flex: none; }
.fields .btn { margin-right: 3px; }
.btn { width: 14px; height: 14px; background: #eeebe6; border: 1px solid #fff; border-right-color: #777; border-bottom-color: #777; }
.w-xs { width: 24px; }
.w-s { width: 32px; }
.w-m { width: 39px; }
.w-l { width: 48px; }
.w-xl { width: 62px; }
.w-xxl { width: 78px; }
.cut { width: 50px; padding-left: 0; border-left: none; box-shadow: none; }
.tight { padding-left: 1px; }
.grip { flex: none; width: 3px; height: 13px; margin: 0 3px; background: repeating-linear-gradient(#c8c8c8 0 2px, #f0f0f0 2px 3px); }
.fields .grip { margin: 0 2px 0 0; }
.tools { display: flex; }
.tools button { width: 14px; height: 14px; }
.tools-file { gap: 3px; padding-left: 3px; }
.tools-wide { gap: 4px; }
.tools-small { gap: 2px; }
.tools-small button { width: 13px; }
.tools-small + .grip { margin: 0 5px 0 4px; }
.letters { display: flex; gap: 2px; padding-right: 2px; }
.letters button { width: 14px; height: 14px; margin-top: -2px; border: 1px solid #fff; border-right-color: #888; border-bottom-color: #888; }
.letters .on { background: #f8f8f8; border-color: #777 #fff #fff #777; }
.search { display: flex; gap: 2px; padding-left: 2px; }
.search input { width: 115px; }

/* plan view */
.plan { flex: 1; min-height: 0; display: flex; flex-direction: column; margin-left: 3px; border-top: 2px solid #999; border-left: 1px solid #999; border-bottom: 2px solid #a0a0a8; }
.plan-tools { display: flex; flex: none; gap: 2px; padding: 2px 3px; height: 20px; }
.plan-tools button { width: 16px; height: 16px; padding: 1px; background: #eceae8; border: 1px solid #fff; border-right-color: #777; border-bottom-color: #777; }
.canvas { flex: 1; min-height: 0; margin-left: 1px; background: #000; border-bottom: 1px solid #fff; overflow: hidden; }
.drawing { display: block; width: 100%; }
.drawing path, .drawing circle { fill: none; stroke-width: 1; }
.park path { stroke: #2f9a3c; }
.lots path { stroke: #b28e50; }
.lots .hot { stroke: #c98c1e; }
.road path, .road circle { stroke: #c01c24; }
.drawing text { font-family: "Liberation Sans", Arial, sans-serif; text-anchor: middle; dominant-baseline: central; }
.dims text { font-size: 9px; fill: #f01414; stroke: #f01414; stroke-width: .4px; }
.names text { font-size: 13px; fill: #0000e8; stroke: #0000e8; stroke-width: .4px; }

/* bottom */
footer { flex: none; background: #f6f6f6; color: #888; }
.tabs { display: flex; height: 16px; padding-left: 5px; }
.tabs button { gap: 1px; height: 16px; }
.tabs button + button { margin-left: 4px; padding-left: 3px; background: linear-gradient(#bbb, #bbb) 0 3px / 1px 10px no-repeat; }
.tabs svg { width: 12px; height: 12px; }
.tabs button.active { padding: 0 4px 0 2px; gap: 2px; background: #f0f0f0; color: #111; font-weight: bold; border: 1px solid #fff; border-right-color: #777; border-bottom-color: #777; }
.status { display: flex; gap: 1px; height: 16px; padding: 2px 0 1px; background: #f0f0f0; justify-content: flex-end; }
.status-msg { width: 269px; border: 1px solid #b4b4b4; }
.key { width: 20px; border: 1px solid #b4b4b4; color: #444; line-height: 11px; text-align: center; }
.num { width: 23px; }
.last { width: 5px; overflow: hidden; border-right: none; }
.docked { display: flex; gap: 10px; height: 15px; padding-left: 4px; }
.docked button { width: 92px; height: 17px; justify-content: flex-start; padding-left: 3px; border: 1px solid #b4b4b4; background: #f0f0f0; }
.docked .wide { width: 98px; }

/* lot annotation dialog */
.dialog { position: absolute; left: 879px; top: 84px; width: 211px; background: #f0f0f0; border: 1px solid #ccc; }
.dlg-title { display: flex; align-items: center; height: 21px; padding: 0 10px 0 5px; background: #fff; color: #999; }
.dlg-title .logo { width: 11px; height: 11px; }
.dlg-title h2 { flex: 1; padding-left: 3px; white-space: nowrap; }
.dlg-title button { width: 10px; height: 10px; margin-left: 22px; }
.dlg-title h2 + button { margin-left: 0; }
.dlg-body { padding: 3px 3px 3px; }
.dlg-body fieldset { padding: 0 4px 4px 3px; }
.dlg-body legend { margin-left: 1px; line-height: 12px; }
.row { display: flex; align-items: center; gap: 2px; height: 16px; }
.row label { flex: 1; min-width: 0; white-space: nowrap; padding-left: 1px; }
.row input, .row select { width: 76px; }
.row .file { padding: 0 2px; }
.row .tight { padding-left: 1px; }
.check label { padding-left: 2px; }
.check input[type="checkbox"] { width: 8px; height: 8px; margin-right: 1px; padding: 0; display: grid; place-items: center; }
.check input[type="checkbox"]:checked::after { content: "✔"; font: 8px/8px "DejaVu Sans", sans-serif; color: #000; }
.actions { display: flex; justify-content: space-between; padding: 2px 6px 0 4px; }
.actions button { width: 39px; height: 15px; border: 1px solid #fff; border-right-color: #888; border-bottom-color: #888; box-shadow: inset -1px -1px 0 #ccc; }
.actions .default { border-color: #777; }
.actions.top { padding: 1px 14px 1px 13px; }
.dlg-body .params { height: 180px; padding-bottom: 3px; display: flex; flex-direction: column; justify-content: space-between; }
.dlg-body .data { padding-top: 1px; }
.dlg-body .inner { margin-top: 2px; padding: 2px 4px 3px 4px; }
.pickers { display: flex; gap: 2px; padding-bottom: 1px; }
.pickers .btn { width: 16px; height: 16px; }
.message { display: block; height: 13px; margin-top: 2px; padding-left: 4px; border: 1px solid #fff; border-top-color: #777; border-left-color: #777; }
.cursor { position: absolute; left: 76px; top: 13px; width: 16px; height: 28px; }
```
